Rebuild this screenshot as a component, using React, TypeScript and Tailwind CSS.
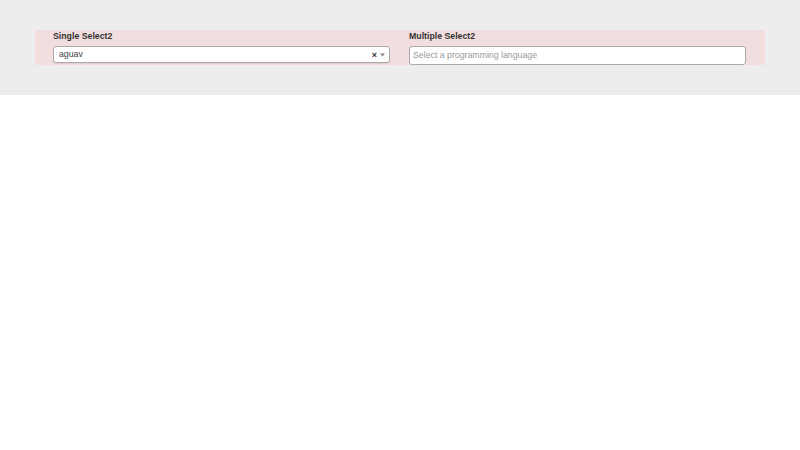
import React from "react";

export default function App() {
  return (
    <div className="w-[800px] h-[450px] bg-white" style={{ fontFamily: '"Liberation Sans", Arial, sans-serif' }}>
      <div className="h-[95px] bg-[#ededed] pt-[30px] px-[35px]">
        <div className="h-[35px] bg-[#f2dede] flex pl-[18px] pr-[19px] gap-[19px]">
          <div className="w-[337px] flex flex-col">
            <div className="h-[12px] leading-[13px] text-[8.75px] font-bold text-[#333]">Single Select2</div>
            <div className="mt-[4px] h-[17px] border border-[#aaa] rounded-[3px] bg-white flex items-center pl-[5px] pr-[4px] shadow-[0_1px_1px_rgba(0,0,0,0.08)]">
              <span className="text-[8.75px] text-[#444] flex-1 pt-[1px]">aguav</span>
              <span className="text-[9px] font-bold text-[#333] leading-none mr-[3px] pt-[1px]">×</span>
              <svg width="5" height="4" viewBox="0 0 5 4">
                <path d="M0 0.5 L5 0.5 L2.5 3.5 Z" fill="#888" />
              </svg>
            </div>
          </div>
          <div className="w-[337px] flex flex-col">
            <div className="h-[12px] leading-[13px] text-[8.75px] font-bold text-[#333]">Multiple Select2</div>
            <div className="mt-[4px] h-[19px] border border-[#aaa] rounded-[3px] bg-white flex items-center pl-[3px]">
              <span className="text-[8.75px] text-[#999] pt-[1px]">Select a programming language</span>
            </div>
          </div>
        </div>
      </div>
    </div>
  );
}
